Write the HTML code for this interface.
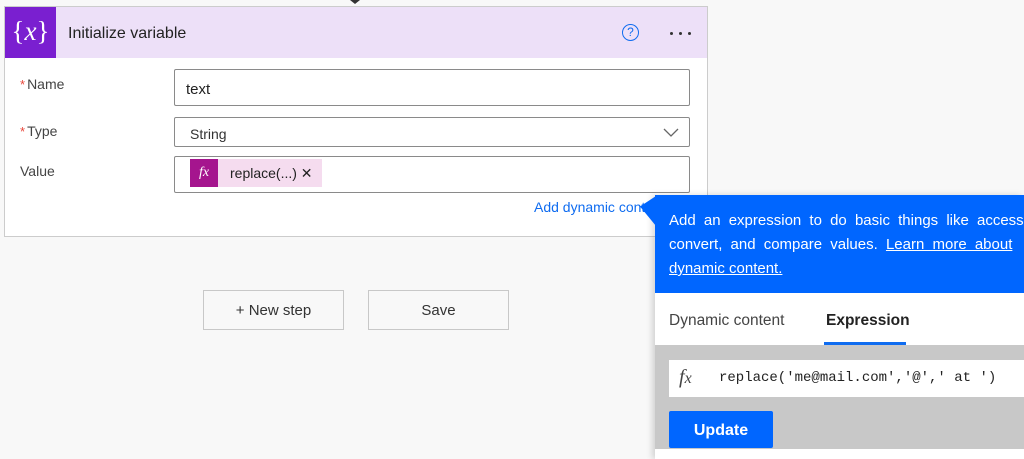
<!DOCTYPE html><html><head><style>
body{margin:0;width:1024px;height:459px;background:#f8f8f8;font-family:"Liberation Sans",sans-serif;position:relative;overflow:hidden;color:#333}
.a{position:absolute}
.inp{position:absolute;left:174px;width:516px;border:1px solid #8a8a8a;border-radius:2px;background:#fff;box-sizing:border-box}
.lbl{position:absolute;left:20px;font-size:14px;color:#444}
.st{color:#e8473b;font-size:13px;margin-right:2px}
.btn{position:absolute;top:290px;width:141px;height:40px;border:1px solid #c8c8c8;background:#f8f8f8;font-size:15px;text-align:center;line-height:40px;color:#333;box-sizing:border-box}
.dot{position:absolute;top:32px;width:3px;height:3px;border-radius:50%;background:#333}
</style></head><body>
<div class="a" style="left:350px;top:0;width:10px;height:4px;background:#333;clip-path:polygon(0 0,100% 0,50% 100%)"></div>
<div class="a" style="left:4px;top:6px;width:704px;height:231px;background:#fff;border:1px solid #ccc;box-sizing:border-box"></div>
<div class="a" style="left:5px;top:7px;width:702px;height:51px;background:#ede0f8"></div>
<div class="a" style="left:5px;top:7px;width:51px;height:51px;background:#7a1fd0;color:#fff;font-family:'Liberation Serif',serif;font-size:27px;text-align:center;line-height:48px">{<i>x</i>}</div>
<div class="a" style="left:68px;top:25px;font-size:16px;color:#222">Initialize variable</div>
<div class="a" style="left:622px;top:24px;width:15px;height:15px;border:1.5px solid #0f6cf0;border-radius:50%;color:#0f6cf0;font-size:12px;text-align:center;line-height:15px">?</div>
<div class="dot" style="left:670px"></div><div class="dot" style="left:679px"></div><div class="dot" style="left:688px"></div>
<div class="lbl" style="top:76px"><span class="st">*</span>Name</div>
<div class="inp" style="top:69px;height:37px"><span class="a" style="left:11px;top:11px;font-size:15px;color:#222">text</span></div>
<div class="lbl" style="top:123px"><span class="st">*</span>Type</div>
<div class="inp" style="top:117px;height:30px"><span class="a" style="left:15px;top:8px;font-size:14px;color:#333">String</span>
<svg class="a" style="right:10px;top:10px" width="16" height="10"><path d="M1 1L8 8L15 1" fill="none" stroke="#666" stroke-width="1.3"/></svg></div>
<div class="lbl" style="top:163px">Value</div>
<div class="inp" style="top:156px;height:37px">
<div class="a" style="left:15px;top:2px;width:132px;height:28px;background:#f5dcef"></div>
<div class="a" style="left:15px;top:2px;width:28px;height:28px;background:#a5158e;color:#fff;font-family:'Liberation Serif',serif;font-style:italic;font-size:14px;text-align:center;line-height:28px">fx</div>
<div class="a" style="left:55px;top:8px;font-size:14px;color:#222">replace(...) ✕</div></div>
<div class="a" style="left:534px;top:199px;font-size:14px;color:#0f6cf0;width:118px;overflow:hidden;white-space:nowrap">Add dynamic content</div>
<div class="btn" style="left:203px">+ New step</div>
<div class="btn" style="left:368px">Save</div>
<div class="a" style="left:655px;top:195px;width:369px;height:264px;background:#fff;box-shadow:-3px 0 6px rgba(0,0,0,.15)"></div>
<div class="a" style="left:640px;top:196px;width:16px;height:30px;background:#0066ff;clip-path:polygon(100% 0,0 35%,100% 100%)"></div>
<div class="a" style="left:655px;top:195px;width:369px;height:98px;background:#0066ff;color:#fff;font-size:15px;line-height:24px;box-sizing:border-box;padding:14px 0 0 14px;word-spacing:4px;white-space:nowrap">Add an expression to do basic things like access,<br>convert, and compare values. <u>Learn more about</u><br><u style="word-spacing:0">dynamic content.</u></div>
<div class="a" style="left:669px;top:312px;font-size:15.5px;color:#444">Dynamic content</div>
<div class="a" style="left:826px;top:312px;font-size:15.5px;color:#222;font-weight:bold">Expression</div>
<div class="a" style="left:824px;top:342px;width:82px;height:3px;background:#0f6cf0"></div>
<div class="a" style="left:655px;top:345px;width:369px;height:104px;background:#c8c8c8"></div>
<div class="a" style="left:669px;top:360px;width:355px;height:37px;background:#fff"></div>
<div class="a" style="left:679px;top:366px;font-family:'Liberation Serif',serif;font-style:italic;font-size:20px;color:#444">f<span style="font-size:16px">x</span></div>
<div class="a" style="left:719px;top:370px;font-family:'Liberation Mono',monospace;font-size:14px;color:#222">replace('me@mail.com','@',' at ')</div>
<div class="a" style="left:669px;top:411px;width:104px;height:37px;background:#0066ff;color:#fff;font-size:16px;text-align:center;line-height:40px;border-radius:2px;font-weight:bold">Update</div>
</body></html>
